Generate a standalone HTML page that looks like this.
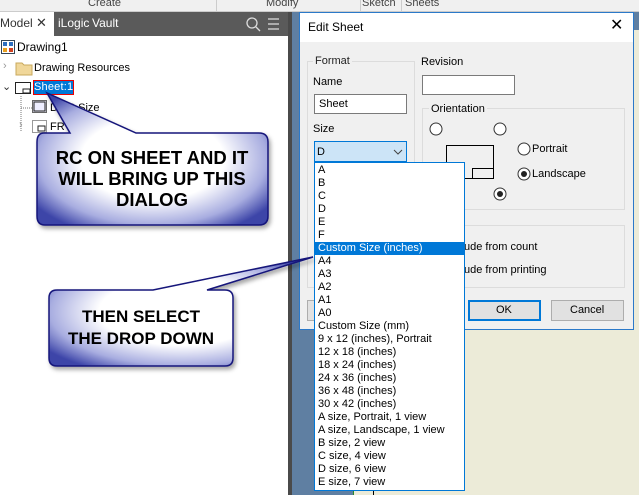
<!DOCTYPE html>
<html><head><meta charset="utf-8"><style>
*{margin:0;padding:0;box-sizing:border-box}
body{width:639px;height:495px;overflow:hidden;position:relative;background:#5f7fa2;font-family:"Liberation Sans",sans-serif;font-size:11px;color:#000}
.a{position:absolute}
.t{position:absolute;white-space:nowrap;line-height:13px}
.li{position:absolute;left:3px;white-space:nowrap;line-height:13px;font-size:11px}
</style></head><body>
<div class="a" style="left:0;top:0;width:639px;height:12px;background:#f0f0f0;border-bottom:1px solid #ccc"></div>
<div class="t" style="left:88px;top:-3px;color:#444">Create</div>
<div class="t" style="left:266px;top:-3px;color:#444">Modify</div>
<div class="a" style="left:216px;top:0;width:1px;height:12px;background:#ccc"></div>
<div class="a" style="left:360px;top:0;width:1px;height:12px;background:#ccc"></div>
<div class="a" style="left:401px;top:0;width:1px;height:12px;background:#ccc"></div>
<div class="t" style="left:362px;top:-3px;color:#444">Sketch</div>
<div class="t" style="left:405px;top:-3px;color:#444">Sheets</div>
<div class="a" style="left:0;top:12px;width:288px;height:483px;background:#fff"></div>
<div class="a" style="left:54px;top:12px;width:234px;height:24px;background:#5a5a5a"></div>
<div class="a" style="left:288px;top:12px;width:4px;height:483px;background:#4a4a4a"></div>
<div class="t" style="left:0;top:17px;color:#333;font-size:12px">Model</div>
<div class="t" style="left:36px;top:16px;color:#333;font-size:13px">✕</div>
<div class="t" style="left:58px;top:17px;color:#fff;font-size:12px">iLogic</div>
<div class="t" style="left:92px;top:17px;color:#fff;font-size:12px">Vault</div>
<svg class="a" style="left:244px;top:15px" width="40" height="18"><circle cx="8" cy="8" r="5" fill="none" stroke="#ddd" stroke-width="1.3"/><line x1="12" y1="12" x2="16" y2="16" stroke="#ddd" stroke-width="1.3"/><path d="M24 4h11M24 9h11M24 14h11" stroke="#ddd" stroke-width="1.3"/></svg>
<svg class="a" style="left:1px;top:40px" width="14" height="14"><rect x="0.5" y="0.5" width="13" height="13" fill="#fff" stroke="#345"/><rect x="2" y="2" width="4" height="4" fill="#2d6fc0"/><rect x="8" y="2" width="4" height="4" fill="#2d6fc0"/><rect x="2" y="8" width="4" height="4" fill="#e8a020"/><rect x="8" y="8" width="4" height="4" fill="#d04020"/></svg>
<div class="t" style="left:17px;top:41px;font-size:12px">Drawing1</div>
<div class="t" style="left:3px;top:60px;color:#999">›</div>
<svg class="a" style="left:15px;top:60px" width="18" height="16"><path d="M1 3h6l2 2h8v10H1z" fill="#f0d79a" stroke="#c9a85c"/></svg>
<div class="t" style="left:34px;top:62px">Drawing Resources</div>
<div class="t" style="left:2px;top:81px;color:#333">⌄</div>
<svg class="a" style="left:15px;top:81px" width="17" height="14"><rect x="0.5" y="1.5" width="15" height="11" fill="#fff" stroke="#222"/><rect x="8" y="8" width="7" height="4" fill="none" stroke="#222"/></svg>
<div class="a" style="left:33px;top:80px;width:41px;height:15px;background:#0078d7;border:1px solid #e00"></div>
<div class="t" style="left:34px;top:81px;color:#fff;font-size:11px;letter-spacing:0.2px">Sheet:1</div>
<svg class="a" style="left:20px;top:96px" width="14" height="36"><path d="M1 0v36M1 12h12" stroke="#777" stroke-dasharray="1 1"/></svg>
<svg class="a" style="left:32px;top:100px" width="16" height="14"><rect x="0.5" y="0.5" width="14" height="12" fill="#dde" stroke="#666"/><rect x="2" y="2" width="11" height="9" fill="#eef" stroke="#222"/></svg>
<div class="t" style="left:50px;top:102px">D - B Size</div>
<svg class="a" style="left:32px;top:120px" width="16" height="14"><rect x="0.5" y="0.5" width="14" height="12" fill="#fff" stroke="#999"/><rect x="6" y="6" width="7" height="5" fill="none" stroke="#222"/></svg>
<div class="t" style="left:19px;top:119px;color:#999">›</div>
<div class="t" style="left:50px;top:121px">FR</div>
<div class="a" style="left:353px;top:330px;width:286px;height:165px;background:#ecebd8"></div>
<div class="a" style="left:633px;top:30px;width:6px;height:300px;background:#ecebd8"></div>
<div class="a" style="left:353px;top:330px;width:1px;height:165px;background:#2a8a2a"></div>
<div class="a" style="left:373px;top:488px;width:1px;height:7px;background:#000"></div>
<div class="a" style="left:299px;top:12px;width:335px;height:318px;background:#f0f0f0;border:1px solid #2b79c9"></div>
<div class="a" style="left:300px;top:13px;width:333px;height:29px;background:#fff"></div>
<div class="t" style="left:308px;top:21px;font-size:12px">Edit Sheet</div>
<div class="t" style="left:610px;top:17px;font-size:16px;line-height:18px">✕</div>
<div class="a" style="left:307px;top:61px;width:108px;height:227px;border:1px solid #dcdcdc"></div>
<div class="t" style="left:313px;top:55px;background:#f0f0f0;padding:0 2px;color:#222">Format</div>
<div class="t" style="left:313px;top:76px">Name</div>
<div class="a" style="left:314px;top:94px;width:93px;height:20px;background:#fff;border:1px solid #7a7a7a"></div>
<div class="t" style="left:319px;top:98px">Sheet</div>
<div class="t" style="left:313px;top:123px">Size</div>
<div class="a" style="left:314px;top:141px;width:93px;height:21px;background:#cce4f7;border:1px solid #0078d7"></div>
<div class="t" style="left:317px;top:146px">D</div>
<svg class="a" style="left:393px;top:148px" width="10" height="8"><path d="M1 2l4 4 4-4" fill="none" stroke="#444"/></svg>
<div class="t" style="left:421px;top:56px">Revision</div>
<div class="a" style="left:422px;top:75px;width:93px;height:20px;background:#fff;border:1px solid #7a7a7a"></div>
<div class="a" style="left:422px;top:108px;width:203px;height:102px;border:1px solid #dcdcdc"></div>
<div class="t" style="left:429px;top:103px;background:#f0f0f0;padding:0 2px">Orientation</div>
<svg class="a" style="left:428px;top:120px" width="110" height="84">
<g fill="#fff" stroke="#333"><circle cx="8" cy="9" r="6"/><circle cx="72" cy="9" r="6"/><circle cx="72" cy="74" r="6"/></g>
<circle cx="72" cy="74" r="3" fill="#222"/>
<rect x="18.5" y="25.5" width="47" height="33" fill="none" stroke="#000"/><rect x="44.5" y="48.5" width="21" height="10" fill="none" stroke="#000"/>
<g fill="#fff" stroke="#333"><circle cx="96" cy="29" r="6"/><circle cx="96" cy="54" r="6"/></g><circle cx="96" cy="54" r="3" fill="#222"/>
</svg>
<div class="t" style="left:532px;top:143px">Portrait</div>
<div class="t" style="left:532px;top:168px">Landscape</div>
<div class="a" style="left:440px;top:225px;width:185px;height:63px;border:1px solid #dcdcdc"></div>
<div class="t" style="left:453px;top:220px;background:#f0f0f0;padding:0 2px">s</div>
<div class="t" style="left:464px;top:241px">ude from count</div>
<div class="t" style="left:464px;top:264px">ude from printing</div>
<div class="a" style="left:468px;top:300px;width:73px;height:21px;background:#e1e1e1;border:2px solid #0078d7"></div>
<div class="t" style="left:496px;top:304px">OK</div>
<div class="a" style="left:551px;top:300px;width:73px;height:21px;background:#e1e1e1;border:1px solid #adadad"></div>
<div class="t" style="left:570px;top:304px">Cancel</div>
<div class="a" style="left:307px;top:300px;width:10px;height:21px;background:#e1e1e1;border:1px solid #adadad"></div>
<div class="a" style="left:314px;top:162px;width:151px;height:329px;background:#fff;border:1px solid #0078d7">
<div class="a" style="left:0;top:79px;width:149px;height:13px;background:#0078d7"></div>
<div class="li" style="top:1px">A</div><div class="li" style="top:14px">B</div><div class="li" style="top:27px">C</div><div class="li" style="top:40px">D</div><div class="li" style="top:53px">E</div><div class="li" style="top:66px">F</div>
<div class="li" style="top:79px;color:#fff">Custom Size (inches)</div>
<div class="li" style="top:92px">A4</div><div class="li" style="top:105px">A3</div><div class="li" style="top:118px">A2</div><div class="li" style="top:131px">A1</div><div class="li" style="top:144px">A0</div>
<div class="li" style="top:157px">Custom Size (mm)</div>
<div class="li" style="top:170px">9 x 12 (inches), Portrait</div>
<div class="li" style="top:183px">12 x 18 (inches)</div>
<div class="li" style="top:196px">18 x 24 (inches)</div>
<div class="li" style="top:209px">24 x 36 (inches)</div>
<div class="li" style="top:222px">36 x 48 (inches)</div>
<div class="li" style="top:235px">30 x 42 (inches)</div>
<div class="li" style="top:248px">A size, Portrait, 1 view</div>
<div class="li" style="top:261px">A size, Landscape, 1 view</div>
<div class="li" style="top:274px">B size, 2 view</div>
<div class="li" style="top:287px">C size, 4 view</div>
<div class="li" style="top:300px">D size, 6 view</div>
<div class="li" style="top:313px">E size, 7 view</div>
</div>
<svg class="a" style="left:0;top:0" width="639" height="495">
<defs>
<radialGradient id="g1" cx="0.5" cy="0.5" r="0.62"><stop offset="0.5" stop-color="#ffffff"/><stop offset="0.8" stop-color="#a8ade0"/><stop offset="1" stop-color="#3c44a8"/></radialGradient>
<filter id="sh"><feDropShadow dx="2" dy="3" stdDeviation="2" flood-opacity="0.35"/></filter>
</defs>
<path d="M44 133 Q37 133 37 142 L37 216 Q37 225 45 225 L259 225 Q268 225 268 216 L268 142 Q268 133 259 133 L136 133 L47 93 L70 133 Z" fill="url(#g1)" stroke="#12127a" stroke-width="1.5" filter="url(#sh)"/>
<path d="M57 290 Q49 290 49 298 L49 358 Q49 366 57 366 L225 366 Q233 366 233 358 L233 298 Q233 290 225 290 L207 290 L313 257 L153 290 Z" fill="url(#g1)" stroke="#12127a" stroke-width="1.5" filter="url(#sh)"/>
<g font-family="Liberation Sans, sans-serif" font-weight="bold" font-size="18.5" text-anchor="middle" fill="#000">
<text x="152" y="164">RC ON SHEET AND IT</text>
<text x="152" y="185">WILL BRING UP THIS</text>
<text x="152" y="206">DIALOG</text>
</g>
<g font-family="Liberation Sans, sans-serif" font-weight="bold" font-size="17" text-anchor="middle" fill="#000">
<text x="141" y="322">THEN SELECT</text>
<text x="141" y="344">THE DROP DOWN</text>
</g>
</svg>
</body></html>
